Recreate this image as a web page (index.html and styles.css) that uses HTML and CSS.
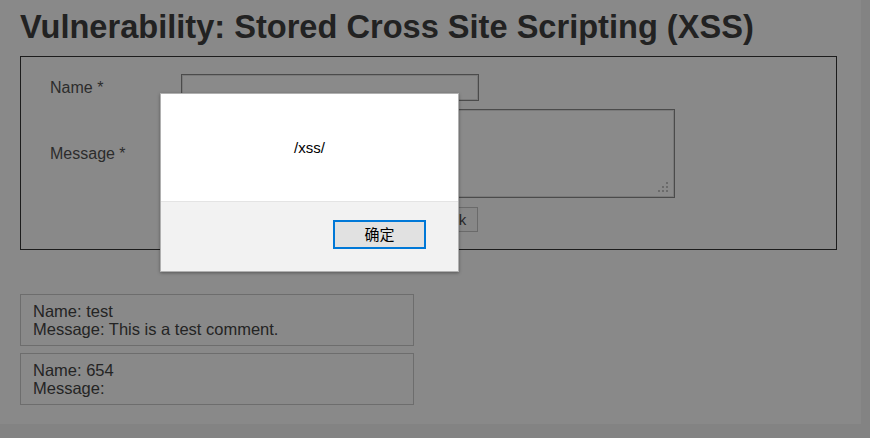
FILE: index.html
```html
<!DOCTYPE html>
<html>
<head>
<meta charset="utf-8">
<link rel="stylesheet" href="styles.css">
</head>
<body>
<div class="page">
  <h1 class="title">Vulnerability: Stored Cross Site Scripting (XSS)</h1>
  <form class="guest-form">
    <label class="lbl">Name *</label>
    <input class="txt-name" type="text">
    <label class="lbl">Message *</label>
    <div class="ta-wrap">
      <textarea class="txt-msg"></textarea>
      <svg class="grip" width="12" height="12" viewBox="0 0 12 12">
        <rect x="8" y="0" width="2" height="2"/>
        <rect x="4" y="4" width="2" height="2"/>
        <rect x="8" y="4" width="2" height="2"/>
        <rect x="0" y="8" width="2" height="2"/>
        <rect x="4" y="8" width="2" height="2"/>
        <rect x="8" y="8" width="2" height="2"/>
      </svg>
    </div>
    <span></span>
    <div class="btns">
      <button type="button" class="btn">Sign Guestbook</button>
      <button type="button" class="btn">Clear Guestbook</button>
    </div>
  </form>
  <div class="comments">
    <div class="comment">Name: test<br>Message: This is a test comment.</div>
    <div class="comment">Name: 654<br>Message: </div>
  </div>
</div>
<div class="dialog">
  <div class="dlg-body">/xss/</div>
  <div class="dlg-foot">
    <button type="button" class="dlg-btn">确定</button>
  </div>
</div>
</body>
</html>
```
FILE: styles.css
```css
html, body {
  margin: 0;
  padding: 0;
  background: #838383;
  width: 870px;
  height: 438px;
  overflow: hidden;
}
.page {
  box-sizing: border-box;
  width: 861px;
  height: 424px;
  background: #898989;
  padding: 8px 20px 0 20px;
  font-family: "Liberation Sans", Arial, sans-serif;
  color: #262626;
}
.title {
  margin: 0 0 11px 0;
  font-size: 32.6px;
  line-height: 37px;
  font-weight: 700;
  color: #222222;
}
.guest-form {
  box-sizing: border-box;
  width: 817px;
  height: 194px;
  border: 1px solid #1c1c1c;
  margin: 0;
  padding: 17px 0 0 29px;
  display: grid;
  grid-template-columns: 131px auto;
  align-content: start;
  row-gap: 8px;
  align-items: center;
  justify-items: start;
}
.lbl {
  font-size: 16px;
  color: #2c2c2c;
}
.txt-name {
  box-sizing: border-box;
  width: 298px;
  height: 27px;
  margin: 0;
  background: #8a8a8a;
  border: 1px solid #4b4b4b;
  outline: 1px solid #7a7a7a;
  outline-offset: -2px;
}
.ta-wrap {
  position: relative;
  width: 494px;
  height: 89px;
}
.txt-msg {
  box-sizing: border-box;
  display: block;
  width: 494px;
  height: 89px;
  margin: 0;
  resize: none;
  background: #8a8a8a;
  border: 1px solid #4b4b4b;
  outline: 1px solid #7a7a7a;
  outline-offset: -2px;
}
.grip {
  position: absolute;
  right: 5px;
  bottom: 4px;
  fill: #6a6a6a;
}
.btns {
  display: flex;
  gap: 18px;
  margin-top: 1px;
}
.btn {
  box-sizing: border-box;
  height: 25px;
  padding: 0 11px 0 17px;
  font-family: "Liberation Sans", Arial, sans-serif;
  font-size: 15px;
  color: #262626;
  background: #878787;
  border: 1px solid #6a6a6a;
}
.comments {
  margin-top: 44px;
  display: flex;
  flex-direction: column;
  gap: 7px;
}
.comment {
  box-sizing: border-box;
  width: 394px;
  height: 52px;
  padding: 7px 12px;
  border: 1px solid #6d6d6d;
  font-size: 16.5px;
  line-height: 18px;
  color: #242424;
}
.dialog {
  position: absolute;
  left: 160px;
  top: 93px;
  box-sizing: border-box;
  width: 299px;
  height: 179px;
  border: 1px solid #b0b0b0;
  box-shadow: 0 1px 3px rgba(0, 0, 0, 0.35);
  background: #f2f2f2;
  display: flex;
  flex-direction: column;
}
.dlg-body {
  height: 107px;
  background: #ffffff;
  display: flex;
  align-items: center;
  justify-content: center;
  font-family: "Liberation Sans", Arial, sans-serif;
  font-size: 15px;
  color: #000;
}
.dlg-foot {
  flex: 1;
  border-top: 1px solid #e4e4e4;
  display: flex;
  justify-content: flex-end;
  align-items: flex-start;
  padding: 18px 32px 0 0;
}
.dlg-btn {
  box-sizing: border-box;
  width: 93px;
  height: 29px;
  margin: 0;
  padding: 0 0 3px 0;
  line-height: 1;
  background: #e1e1e1;
  border: 2px solid #0078d7;
  font-family: "Noto Sans CJK SC", sans-serif;
  font-size: 15px;
  color: #000;
}
```
